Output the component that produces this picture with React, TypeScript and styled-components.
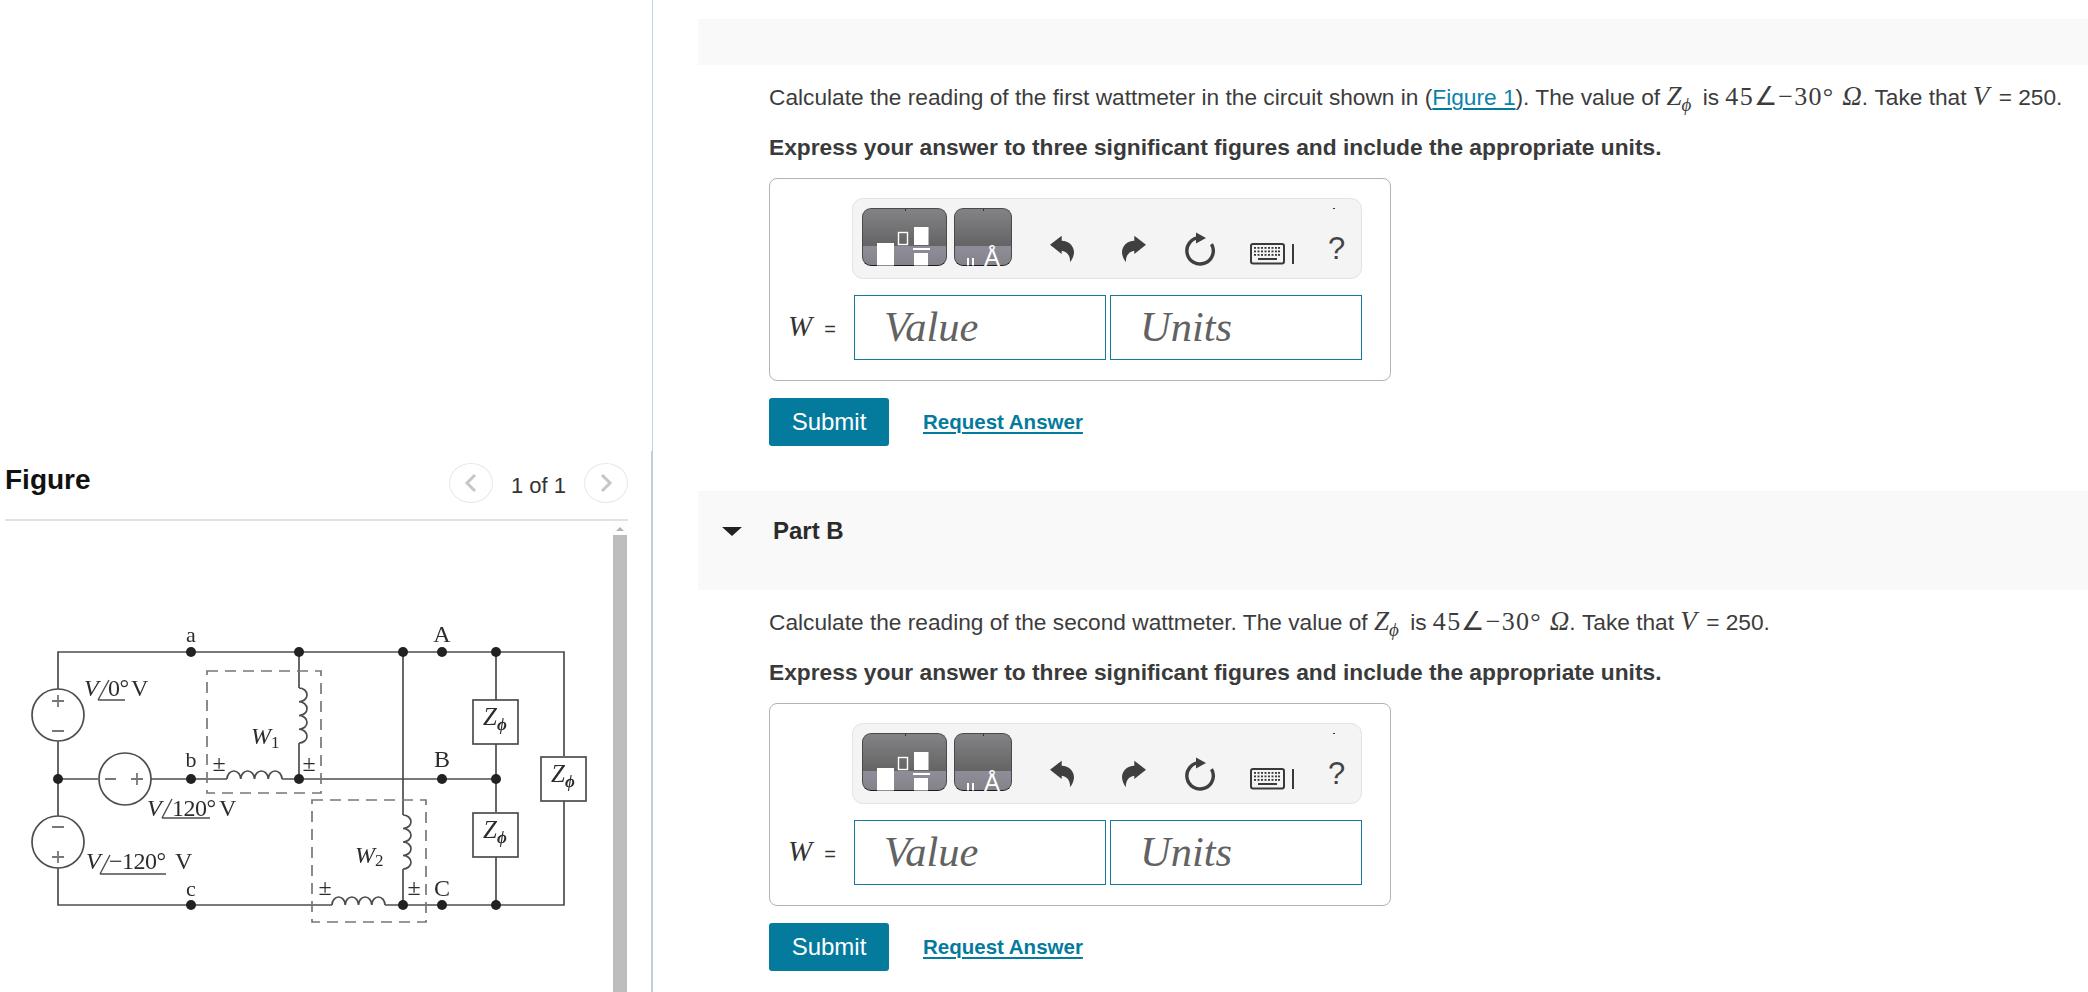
import styled, { createGlobalStyle } from "styled-components";

const GlobalStyle = createGlobalStyle`
  html, body {
    margin: 0;
    padding: 0;
    height: 992px;
    overflow: hidden;
    background: #fff;
    font-family: "Liberation Sans", Arial, sans-serif;
    color: #333;
  }
`;

const Page = styled.div`
  display: flex;
  width: 2088px;
  height: 992px;
  overflow: hidden;
`;

const LeftPane = styled.aside`
  width: 653px;
  flex: none;
  display: flex;
  flex-direction: column;
`;
const TopGap = styled.div`
  height: 451px;
  flex: none;
  border-right: 1px solid #c3d3e2;
`;
const FigurePane = styled.div`
  flex: 1;
  min-height: 0;
  display: flex;
  flex-direction: column;
  border-right: 2px solid #bccfe0;
`;
const FigureHeader = styled.div`
  display: flex;
  align-items: flex-start;
  margin-left: 5px;
  width: 623px;
  height: 70px;
  flex: none;
  box-sizing: border-box;
  border-bottom: 2px solid #e2e2e2;
`;
const FigureTitle = styled.h2`
  margin: 13px 0 0;
  flex: 1;
  font-size: 28px;
  line-height: 32px;
  font-weight: bold;
  color: #111;
`;
const NavButton = styled.button`
  width: 44px;
  height: 40px;
  margin-top: 12px;
  padding: 0;
  display: flex;
  align-items: center;
  justify-content: center;
  background: #fff;
  border: 1px solid #e8e8e8;
  border-radius: 50%;
  color: #c6c6c6;
`;
const PageCount = styled.span`
  width: 91px;
  margin-top: 15px;
  text-align: center;
  font-size: 22px;
  line-height: 40px;
  color: #333;
`;
const FigureBody = styled.div`
  flex: 1;
  min-height: 0;
  display: flex;
`;
const CircuitSvg = styled.svg`
  width: 612px;
  height: 471px;
  flex: none;
  filter: blur(0.45px);
`;
const ScrollTrack = styled.div`
  width: 14px;
  margin-left: 1px;
  display: flex;
  flex-direction: column;
  align-items: center;
  background: #fdfdfd;
`;
const ScrollArrow = styled.div`
  margin: 6px 0 4px;
  width: 0;
  height: 0;
  border-left: 4px solid transparent;
  border-right: 4px solid transparent;
  border-bottom: 4px solid #b4b4b4;
`;
const ScrollThumb = styled.div`
  flex: 1;
  width: 100%;
  background: #bdbdbd;
`;

const RightPane = styled.main`
  flex: 1;
  min-width: 0;
  padding: 19px 0 0 45px;
`;
const PartBar = styled.div<{ $height: number }>`
  height: ${(p) => p.$height}px;
  background: #f9f9f9;
  display: flex;
  align-items: flex-start;
`;
const Caret = styled.span`
  margin: 36px 0 0 24px;
  width: 0;
  height: 0;
  border-left: 10px solid transparent;
  border-right: 10px solid transparent;
  border-top: 9px solid #222;
`;
const PartTitle = styled.h3`
  margin: 25px 0 0 31px;
  font-size: 24px;
  line-height: 30px;
  font-weight: bold;
  color: #2b2b2b;
`;
const PartBody = styled.section<{ $bottom: number }>`
  padding: 18px 0 0 71px;
  margin-bottom: ${(p) => p.$bottom}px;
`;
const Prompt = styled.p`
  margin: 0;
  height: 30px;
  font-size: 22.7px;
  line-height: 29px;
  color: #3c3c3c;
  white-space: nowrap;
`;
const Instruction = styled.p`
  margin: 20px 0 15px;
  height: 30px;
  font-size: 22.75px;
  line-height: 29px;
  font-weight: bold;
  color: #3a3a3a;
  white-space: nowrap;
`;
const FigureLink = styled.a`
  color: #0b82a8;
  text-decoration: underline;
  text-decoration-color: #047a9c;
  text-decoration-thickness: 2px;
  text-underline-offset: 3px;
`;
const MathText = styled.span`
  font-family: "Liberation Serif", "Times New Roman", serif;
  font-size: 26px;
  letter-spacing: 1.3px;
  line-height: 0;
`;
const MathVar = styled.i<{ $after?: number }>`
  font-family: "Liberation Serif", "Times New Roman", serif;
  font-size: 27px;
  line-height: 0;
  margin-right: ${(p) => p.$after ?? 0}px;
`;
const MathSub = styled.sub`
  font-family: "Liberation Serif", "Times New Roman", serif;
  font-style: italic;
  font-size: 19px;
  line-height: 0;
  vertical-align: -6px;
  margin-right: 5px;
`;

const AnswerBox = styled.div`
  width: 622px;
  height: 203px;
  box-sizing: border-box;
  padding: 19px 0 0 19px;
  border: 1px solid #b3b3b3;
  border-radius: 8px;
`;
const Toolbar = styled.div`
  position: relative;
  width: 510px;
  height: 81px;
  box-sizing: border-box;
  margin-left: 63px;
  padding: 9px 0 0 9px;
  background: #f4f4f4;
  border: 1px solid #e3e3e3;
  border-radius: 11px;
`;
const ToolbarInner = styled.div`
  display: flex;
  align-items: flex-end;
  height: 58px;
`;
const Speck = styled.span`
  position: absolute;
  left: 480px;
  top: 9px;
  width: 2px;
  height: 1px;
  background: #333;
`;
const PaletteButton = styled.div<{ $width: number; $gap: number }>`
  position: relative;
  width: ${(p) => p.$width}px;
  height: 58px;
  margin-right: ${(p) => p.$gap}px;
  box-sizing: border-box;
  background: linear-gradient(
    #838287 0%,
    #646464 66%,
    #8f8d98 67%,
    #84838b 100%
  );
  border: 1px solid #4a4a4a;
  border-bottom: 1.5px solid #1c1c1c;
  border-radius: 9px;
  &::before {
    content: "";
    position: absolute;
    top: 0;
    left: 50%;
    width: 1px;
    height: 2px;
    background: #333;
  }
`;
const PaletteArt = styled.svg`
  display: block;
  position: absolute;
  left: -1px;
  top: -1px;
  overflow: visible;
`;
const ToolIcon = styled.svg<{ $left: number; $flip?: boolean }>`
  display: block;
  flex: none;
  height: 34px;
  margin-left: ${(p) => p.$left}px;
  transform: ${(p) => (p.$flip ? "scaleX(-1)" : "none")};
`;
const HelpMark = styled.span`
  margin-left: 32px;
  width: 17px;
  font-size: 31px;
  line-height: 34px;
  text-align: center;
  color: #444;
`;

const AnswerRow = styled.div`
  display: flex;
  align-items: center;
  margin-top: 16px;
`;
const AnswerLabel = styled.label`
  width: 65px;
  flex: none;
  box-sizing: border-box;
  padding-bottom: 2px;
  font-size: 20px;
  white-space: nowrap;
  color: #333;
`;
const AnswerVar = styled.i`
  font-family: "Liberation Serif", "Times New Roman", serif;
  font-size: 29px;
  margin: 0 12px 0 -1px;
`;
const AnswerInput = styled.input`
  width: 252px;
  height: 65px;
  box-sizing: border-box;
  margin-right: 4px;
  padding: 0 29px 2px;
  border: 1px solid #16789a;
  border-radius: 0;
  outline: none;
  background: #fff;
  font-family: "Liberation Serif", "Times New Roman", serif;
  font-style: italic;
  font-size: 42.5px;
  &::placeholder {
    color: #626262;
    opacity: 1;
  }
`;

const ActionRow = styled.div`
  display: flex;
  align-items: center;
  margin-top: 17px;
`;
const SubmitButton = styled.button`
  width: 120px;
  height: 48px;
  padding: 0;
  border: none;
  border-radius: 3px;
  background: #047a9c;
  color: #fff;
  font-family: inherit;
  font-size: 24px;
`;
const RequestLink = styled.a`
  margin-left: 34px;
  font-size: 20.5px;
  font-weight: bold;
  color: #047a9c;
  text-decoration: underline;
  text-decoration-thickness: 2px;
  text-underline-offset: 3px;
`;

const INK = "#4d4d4d";

function verticalCoil(x: number, y0: number, y1: number, n: number) {
  const h = (y1 - y0) / n;
  let d = `M${x} ${y0}`;
  for (let i = 0; i < n; i++) d += ` a8 ${h / 2} 0 0 1 0 ${h}`;
  return d;
}

function horizontalCoil(x0: number, x1: number, y: number, n: number) {
  const w = (x1 - x0) / n;
  let d = `M${x0} ${y}`;
  for (let i = 0; i < n; i++) d += ` a${w / 2} 8 0 0 1 ${w} 0`;
  return d;
}

const NODES: [number, number][] = [
  [191, 652], [299, 652], [403, 652], [442, 652], [496, 652],
  [58, 779], [191, 779], [299, 779], [442, 779], [496, 779],
  [191, 905], [403, 905], [442, 905], [496, 905],
];

const SERIF = "'Liberation Serif', 'Times New Roman', serif";

function Impedance({ x, y }: { x: number; y: number }) {
  return (
    <g>
      <rect x={x} y={y} width="45" height="44" fill="#fff" stroke={INK} strokeWidth="1.7" />
      <text x={x + 10} y={y + 25} fontFamily={SERIF} fontStyle="italic" fontSize="25" fill="#2c2c2c">
        Z
        <tspan dy="5" fontSize="17" fontWeight="bold">ϕ</tspan>
      </text>
    </g>
  );
}

function Circuit() {
  return (
    <CircuitSvg viewBox="0 521 612 471">
      <g fill="none" stroke={INK} strokeWidth="1.7">
        <path d="M58 689 V652 H564 V756 M564 801 V905 H385 M332 905 H58 V868 M58 816 V741" />
        <path d="M58 779 H98 M151 779 H227 M282 779 H496" />
        <path d="M496 652 V700 M496 744 V812 M496 857 V905" />
        <path d="M299 652 V688 M299 743 V779" />
        <path d="M403 652 V815 M403 869 V905" />
        <path d={verticalCoil(299, 688, 743, 4)} />
        <path d={verticalCoil(403, 815, 869, 4)} />
        <path d={horizontalCoil(227, 282, 779, 4)} />
        <path d={horizontalCoil(332, 385, 905, 4)} />
        <circle cx="58" cy="715" r="26" />
        <circle cx="125" cy="779" r="26" />
        <circle cx="58" cy="842" r="26" />
        <path d="M52 701 H64 M58 695 V707 M52 731 H64" strokeWidth="1.8" stroke="#777" />
        <path d="M105 779 H116 M131 779 H143 M137 773 V785" strokeWidth="1.8" stroke="#777" />
        <path d="M52 827 H64 M52 857 H64 M58 851 V863" strokeWidth="1.8" stroke="#777" />
        <path
          d="M207 671 H321 V793 H207 Z M312 800 H426 V922 H312 Z"
          stroke="#777"
          strokeDasharray="11 7"
        />
        <path d="M98 700 L109 680 M98 700 H125" strokeWidth="1.4" />
        <path d="M162 818 L172 799 M162 818 H210" strokeWidth="1.4" />
        <path d="M100 874 L110 855 M100 874 H166" strokeWidth="1.4" />
      </g>
      {NODES.map(([x, y]) => (
        <circle key={`${x}-${y}`} cx={x} cy={y} r="5" fill="#222" />
      ))}
      <Impedance x={473} y={700} />
      <Impedance x={473} y={813} />
      <Impedance x={541} y={757} />
      <g fontFamily={SERIF} fontSize="22" fill="#2c2c2c">
        <text x="191" y="642" textAnchor="middle">a</text>
        <text x="442" y="642" textAnchor="middle" fontSize="24">A</text>
        <text x="191" y="767" textAnchor="middle">b</text>
        <text x="442" y="767" textAnchor="middle" fontSize="24">B</text>
        <text x="191" y="896" textAnchor="middle">c</text>
        <text x="442" y="896" textAnchor="middle" fontSize="24">C</text>
        <text x="219" y="771" textAnchor="middle" fontSize="24">±</text>
        <text x="309" y="771" textAnchor="middle" fontSize="24">±</text>
        <text x="325" y="895" textAnchor="middle" fontSize="24">±</text>
        <text x="414" y="895" textAnchor="middle" fontSize="24">±</text>
        <text x="251" y="744" fontStyle="italic" fontSize="24">
          W<tspan dy="4" fontStyle="normal" fontSize="17">1</tspan>
        </text>
        <text x="355" y="863" fontStyle="italic" fontSize="24">
          W<tspan dy="3" fontStyle="normal" fontSize="17">2</tspan>
        </text>
        <g fontSize="24" letterSpacing="-0.5">
          <text x="84" y="696">
            <tspan fontStyle="italic">V</tspan>
            <tspan x="108">0°</tspan>
            <tspan x="131">V</tspan>
          </text>
          <text x="147" y="816">
            <tspan fontStyle="italic">V</tspan>
            <tspan x="172">120°</tspan>
            <tspan x="219">V</tspan>
          </text>
          <text x="86" y="869">
            <tspan fontStyle="italic">V</tspan>
            <tspan x="109">−120°</tspan>
            <tspan x="175">V</tspan>
          </text>
        </g>
      </g>
    </CircuitSvg>
  );
}

function TemplatesArt() {
  return (
    <PaletteArt width="85" height="58" fill="#fff">
      <rect x="15" y="35" width="17" height="22.5" />
      <rect x="36.5" y="24.5" width="9" height="12" fill="none" stroke="#fff" strokeWidth="1.4" />
      <rect x="52" y="19" width="14.5" height="18" />
      <rect x="51" y="40" width="17" height="2" />
      <rect x="52" y="45" width="14" height="12.5" />
    </PaletteArt>
  );
}

function SymbolsArt() {
  return (
    <PaletteArt width="58" height="58" fill="#fff">
      <rect x="13" y="50" width="2" height="7.5" />
      <rect x="18" y="50" width="2" height="7.5" />
      <text x="38" y="58" textAnchor="middle" fontFamily="'Liberation Sans', sans-serif" fontSize="24">
        Å
      </text>
    </PaletteArt>
  );
}

function ArrowIcon({ left, flip }: { left: number; flip?: boolean }) {
  return (
    <ToolIcon viewBox="0 0 25 34" width="25" $left={left} $flip={flip}>
      <path
        d="M0 12.7 L11.7 3.7 V8.7 C19 8.7 24 14 24 20.3 C24 24 22 28 20 30.3 C20.5 25 18 19.5 11.7 18.7 V22 Z"
        fill="#3f3f3f"
      />
    </ToolIcon>
  );
}

function ResetIcon() {
  return (
    <ToolIcon viewBox="0 0 30 34" width="30" $left={39}>
      <path d="M26.5 12.2 A13.2 13.2 0 1 1 15 5.6" fill="none" stroke="#3f3f3f" strokeWidth="3.4" />
      <path d="M11 0.5 L21 6 L11 11.5 Z" fill="#3f3f3f" />
    </ToolIcon>
  );
}

function KeyboardIcon() {
  const rows = [15, 18.5, 22];
  const cols = [4, 7.5, 11, 14.5, 18, 21.5, 25, 28];
  return (
    <ToolIcon viewBox="0 0 46 34" width="46" $left={35}>
      <rect x="1" y="12" width="33" height="19.5" rx="2" fill="none" stroke="#3a3a3a" strokeWidth="2" />
      {rows.map((y) =>
        cols.map((x) => <rect key={`${x}-${y}`} x={x} y={y} width="2" height="1.8" fill="#3a3a3a" />)
      )}
      <rect x="8" y="26" width="19" height="2" fill="#3a3a3a" />
      <path d="M43 12 V32" stroke="#3a3a3a" strokeWidth="2" />
    </ToolIcon>
  );
}

function AnswerForm() {
  return (
    <>
      <AnswerBox>
        <Toolbar>
          <ToolbarInner>
            <PaletteButton $width={85} $gap={7}>
              <TemplatesArt />
            </PaletteButton>
            <PaletteButton $width={58} $gap={0}>
              <SymbolsArt />
            </PaletteButton>
            <ArrowIcon left={38} />
            <ArrowIcon left={46} flip />
            <ResetIcon />
            <KeyboardIcon />
            <HelpMark>?</HelpMark>
          </ToolbarInner>
          <Speck />
        </Toolbar>
        <AnswerRow>
          <AnswerLabel>
            <AnswerVar>W</AnswerVar>=
          </AnswerLabel>
          <AnswerInput placeholder="Value" />
          <AnswerInput placeholder="Units" />
        </AnswerRow>
      </AnswerBox>
      <ActionRow>
        <SubmitButton>Submit</SubmitButton>
        <RequestLink href="#">Request Answer</RequestLink>
      </ActionRow>
    </>
  );
}

function Given() {
  return (
    <>
      The value of <MathVar>Z</MathVar>
      <MathSub>ϕ</MathSub> is <MathText>45∠−30° </MathText>
      <MathVar>Ω</MathVar>. Take that <MathVar $after={3}>V</MathVar> = 250.
    </>
  );
}

export default function App() {
  return (
    <Page>
      <GlobalStyle />
      <LeftPane>
        <TopGap />
        <FigurePane>
          <FigureHeader>
            <FigureTitle>Figure</FigureTitle>
            <NavButton aria-label="Previous">
              <svg width="14" height="22" viewBox="0 0 14 22">
                <path d="M11 3 L3 11 L11 19" fill="none" stroke="currentColor" strokeWidth="3" />
              </svg>
            </NavButton>
            <PageCount>1 of 1</PageCount>
            <NavButton aria-label="Next">
              <svg width="14" height="22" viewBox="0 0 14 22">
                <path d="M3 3 L11 11 L3 19" fill="none" stroke="currentColor" strokeWidth="3" />
              </svg>
            </NavButton>
          </FigureHeader>
          <FigureBody>
            <Circuit />
            <ScrollTrack>
              <ScrollArrow />
              <ScrollThumb />
            </ScrollTrack>
          </FigureBody>
        </FigurePane>
      </LeftPane>
      <RightPane>
        <PartBar $height={46} />
        <PartBody $bottom={45}>
          <Prompt>
            Calculate the reading of the first wattmeter in the circuit shown in (
            <FigureLink href="#">Figure 1</FigureLink>). <Given />
          </Prompt>
          <Instruction>Express your answer to three significant figures and include the appropriate units.</Instruction>
          <AnswerForm />
        </PartBody>
        <PartBar $height={99}>
          <Caret />
          <PartTitle>Part B</PartTitle>
        </PartBar>
        <PartBody $bottom={0}>
          <Prompt>
            Calculate the reading of the second wattmeter. <Given />
          </Prompt>
          <Instruction>Express your answer to three significant figures and include the appropriate units.</Instruction>
          <AnswerForm />
        </PartBody>
      </RightPane>
    </Page>
  );
}
